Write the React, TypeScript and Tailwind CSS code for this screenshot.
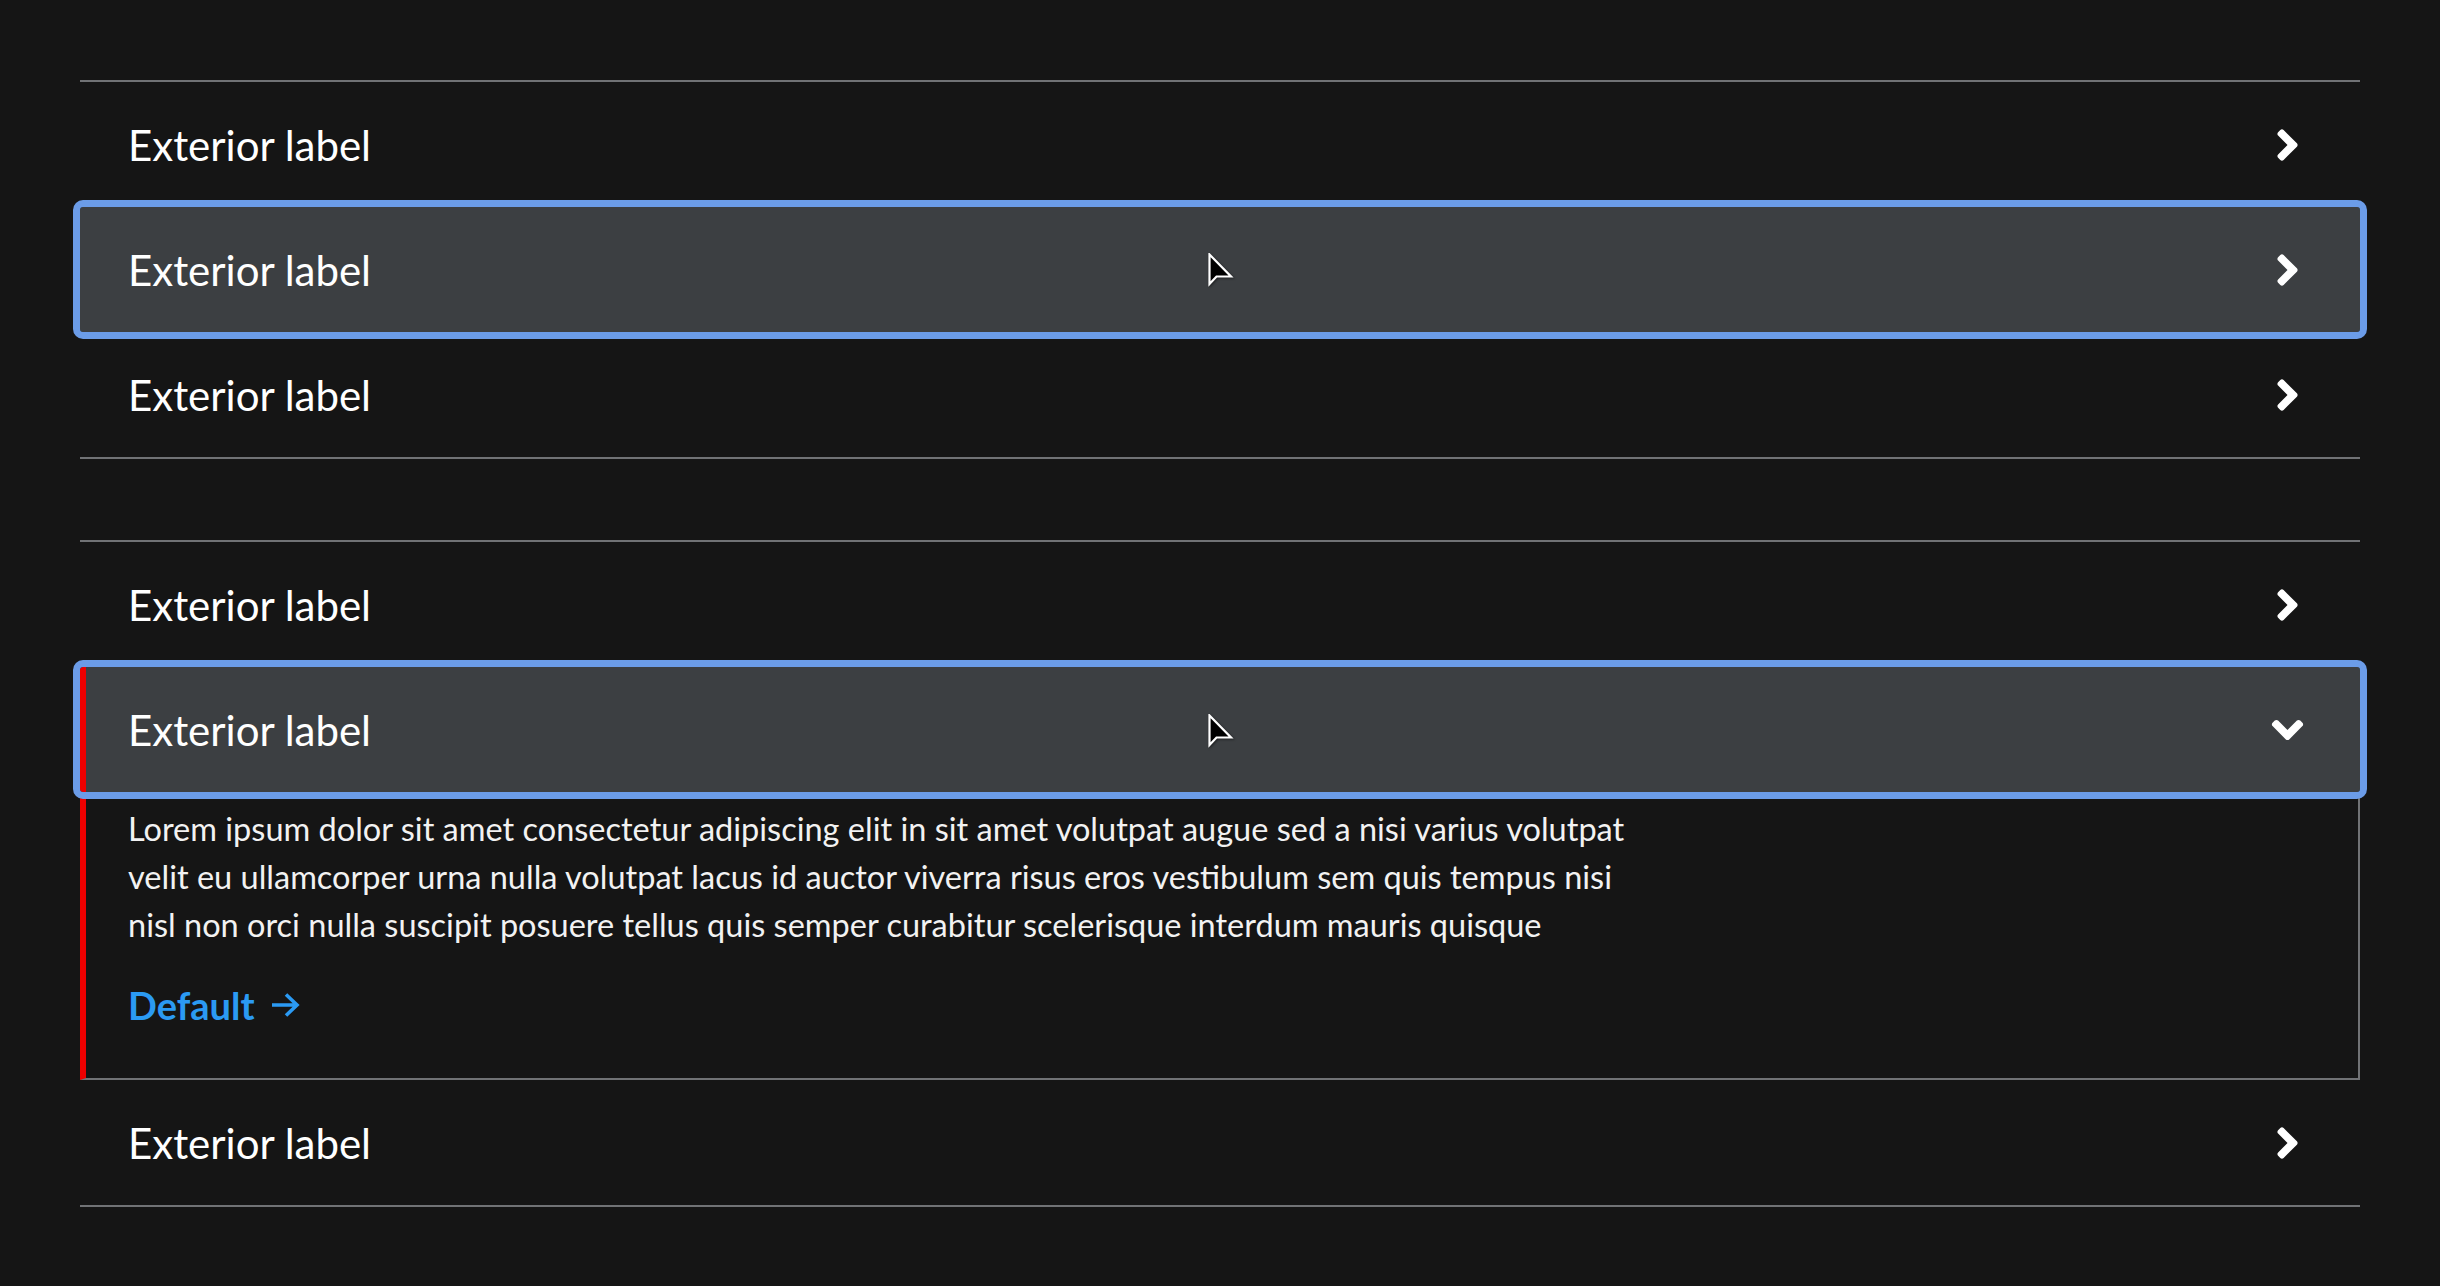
import React from "react";

// Accordion rows, dark theme. Two groups: the first has a hovered row,
// the second has a hovered + expanded row with its body text.

const LINE = "border-[#707275]";

function Chevron({ open = false }: { open?: boolean }) {
  return (
    <svg
      viewBox="0 0 256 512"
      className={`h-[50px] w-[25px] shrink-0 fill-white ${open ? "rotate-90" : ""}`}
    >
      <path d="M224.3 273l-136 136c-9.4 9.4-24.6 9.4-33.9 0l-22.6-22.6c-9.4-9.4-9.4-24.6 0-33.9l96.4-96.4-96.4-96.4c-9.4-9.4-9.4-24.6 0-33.9L54.3 103c9.4-9.4 24.6-9.4 33.9 0l136 136c9.5 9.4 9.5 24.6.1 34z" />
    </svg>
  );
}

function Pointer({ className }: { className: string }) {
  return (
    <svg
      viewBox="0 0 26 34"
      className={`pointer-events-none absolute h-[34px] w-[26px] drop-shadow-[1px_1px_1px_rgba(0,0,0,0.5)] ${className}`}
    >
      <polygon
        points="1.5,1.5 1.5,31 8.5,23.5 23,23.5"
        fill="#000"
        stroke="#fff"
        strokeWidth="2.2"
        strokeLinejoin="miter"
      />
    </svg>
  );
}

function Row({ label }: { label: string }) {
  return (
    <div className="flex h-[125px] items-center justify-between pl-[48px] pr-[60px]">
      <span className="text-[42px] leading-none text-white">{label}</span>
      <Chevron />
    </div>
  );
}

function HoverRow({ label, open = false }: { label: string; open?: boolean }) {
  return (
    <div
      className={`relative z-10 flex h-[125px] items-center justify-between rounded-[3px] bg-[#3c3f42] pr-[60px] outline-[7px] outline-solid outline-[#6b9ce8] ${
        open ? "border-l-[6px] border-l-[#ee0000] pl-[42px]" : "pl-[48px]"
      }`}
    >
      <span className="text-[42px] leading-none text-white">{label}</span>
      <Chevron open={open} />
      <Pointer className={open ? "left-[1122px] top-[47px]" : "left-[1128px] top-[46px]"} />
    </div>
  );
}

export default function App() {
  return (
    <div className="min-h-screen bg-[#151515] px-[80px] pt-[80px] font-[Lato,sans-serif]">
      <div className={`border-y-2 ${LINE}`}>
        <Row label="Exterior label" />
        <HoverRow label="Exterior label" />
        <Row label="Exterior label" />
      </div>

      <div className={`mt-[81px] border-y-2 ${LINE}`}>
        <Row label="Exterior label" />
        <HoverRow label="Exterior label" open />
        <div
          className={`border-b-2 border-l-[6px] border-r-2 ${LINE} border-l-[#ee0000] pb-[53px] pl-[42px] pt-[13px]`}
        >
          <p className="max-w-[1512px] text-[32.5px] leading-[48px] text-[#f2f2f2]">
            Lorem ipsum dolor sit amet consectetur adipiscing elit in sit amet volutpat augue sed a
            nisi varius volutpat velit eu ullamcorper urna nulla volutpat lacus id auctor viverra
            risus eros vestibulum sem quis tempus nisi nisl non orci nulla suscipit posuere tellus
            quis semper curabitur scelerisque interdum mauris quisque
          </p>
          <a
            href="#"
            className="mt-[36px] flex h-[40px] items-center gap-[15px] text-[38px] font-bold leading-none text-[#2b9af3]"
          >
            Default
            <svg viewBox="0 0 30 26" className="h-[26px] w-[30px]" fill="none" stroke="currentColor" strokeWidth="3.6">
              <path d="M2 13H27M16 2.5L27 13L16 23.5" />
            </svg>
          </a>
        </div>
        <Row label="Exterior label" />
      </div>
    </div>
  );
}
